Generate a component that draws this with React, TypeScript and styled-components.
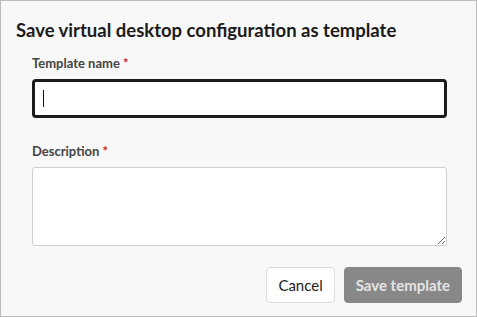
import React from "react";
import styled, { createGlobalStyle } from "styled-components";

const Global = createGlobalStyle`
  html, body { margin: 0; padding: 0; background: #ffffff; }
  * { box-sizing: border-box; }
  body { font-family: "Lato", "Noto Sans", sans-serif; }
`;

const Dialog = styled.div`
  width: 477px;
  height: 317px;
  border: 1px solid #bcbcbc;
  background: #f8f8f8;
  padding: 16px 14px 0 15px;
  display: flex;
  flex-direction: column;
`;

const Title = styled.h2`
  margin: 0;
  font-size: 18.5px;
  line-height: 26px;
  font-weight: 700;
  color: #1b1b1b;
`;

const Form = styled.div`
  display: flex;
  flex-direction: column;
  padding: 0 15px 0 16px;
`;

const Field = styled.div<{ $top: number }>`
  display: flex;
  flex-direction: column;
  margin-top: ${(p) => p.$top}px;
`;

const Label = styled.label`
  font-size: 13px;
  line-height: 16px;
  font-weight: 700;
  color: #444;
  margin-bottom: 8px;
`;

const Req = styled.span`
  color: #d0201a;
`;

const Input = styled.div`
  height: 39px;
  border: 3px solid #1c1c1c;
  border-radius: 4px;
  background: #fff;
  display: flex;
  align-items: center;
  padding-left: 8px;
`;

const Caret = styled.span`
  width: 1px;
  height: 17px;
  background: #111;
`;

const TextArea = styled.textarea`
  height: 79px;
  border: 1px solid #cfcfcf;
  border-radius: 3px;
  background: #fff;
  resize: vertical;
  font-family: inherit;
  outline: none;
`;

const Footer = styled.div`
  display: flex;
  justify-content: flex-end;
  gap: 9px;
  margin-top: 21px;
`;

const Button = styled.button<{ $primary?: boolean }>`
  height: 36px;
  border-radius: 4px;
  font-family: inherit;
  font-size: 15px;
  padding: 0 11px;
  border: 1px solid ${(p) => (p.$primary ? "#888" : "#dcdcdc")};
  background: ${(p) => (p.$primary ? "#888888" : "#ffffff")};
  color: ${(p) => (p.$primary ? "#e4e4e4" : "#222")};
  font-weight: ${(p) => (p.$primary ? 700 : 400)};
`;

export default function App() {
  return (
    <>
      <Global />
      <Dialog>
        <Title>Save virtual desktop configuration as template</Title>
        <Form>
          <Field $top={12}>
            <Label>
              Template name <Req>*</Req>
            </Label>
            <Input>
              <Caret />
            </Input>
          </Field>
          <Field $top={25}>
            <Label>
              Description <Req>*</Req>
            </Label>
            <TextArea />
          </Field>
        </Form>
        <Footer>
          <Button>Cancel</Button>
          <Button $primary>Save template</Button>
        </Footer>
      </Dialog>
    </>
  );
}
